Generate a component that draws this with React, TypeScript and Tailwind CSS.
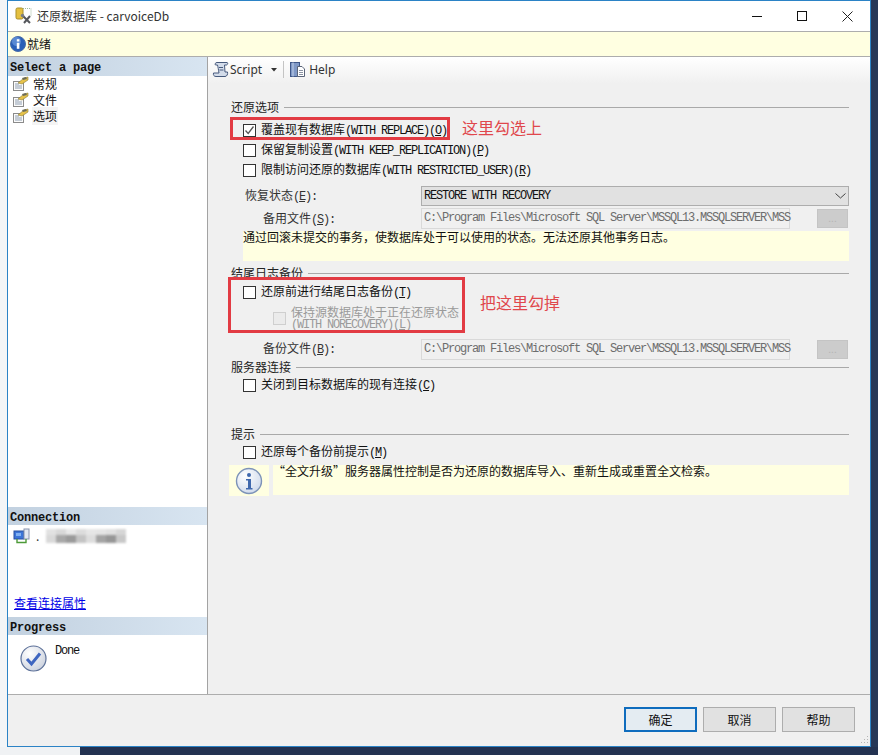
import type { ReactNode } from "react";

const monoCls = "font-['Liberation_Mono',monospace] text-[12px] tracking-[-1.2px]";

function Mono({ children }: { children: ReactNode }) {
  return <span className={monoCls}>{children}</span>;
}

function CheckMark() {
  return (
    <svg width="11" height="11" viewBox="0 0 11 11" fill="none">
      <path d="M1.5 5.5 L4.2 8.5 L9.5 1.5" stroke="#555" strokeWidth="1.3" />
    </svg>
  );
}

function CheckRow({ checked, children }: { checked?: boolean; children: ReactNode }) {
  return (
    <div className="h-5 ml-3 flex items-center gap-[5px] text-[12px] text-[#111]">
      <span className="w-[13px] h-[13px] border border-[#333] bg-white flex items-center justify-center shrink-0">
        {checked && <CheckMark />}
      </span>
      <span className="whitespace-nowrap">{children}</span>
    </div>
  );
}

function GroupHeader({ title, className }: { title: string; className: string }) {
  return (
    <div className={`h-4 flex items-center gap-[5px] text-[12px] text-[#222] ${className}`}>
      <span className="whitespace-nowrap">{title}</span>
      <span className="flex-1 h-px bg-[#a9a9a9]" />
    </div>
  );
}

function PathRow({ label, className }: { label: ReactNode; className: string }) {
  return (
    <div className={`flex items-center ${className}`}>
      <div className="w-[190px] pl-8 text-[12px] text-[#333] whitespace-nowrap">{label}</div>
      <div className={`w-[369px] h-[21px] border border-[#d9d9d9] bg-[#f0f0f0] text-[#6d6d6d] pl-[2px] leading-[19px] whitespace-nowrap ${monoCls}`}>
        C:\Program Files\Microsoft SQL Server\MSSQL13.MSSQLSERVER\MSS
      </div>
      <div className="ml-[27px] w-[31px] h-[19px] bg-[#cccccc] border border-[#c4c4c4] text-[#b5b5b5] text-[10px] leading-[15px] text-center">
        ...
      </div>
    </div>
  );
}

function SideHeader({ title, className }: { title: string; className: string }) {
  return (
    <div className={`pl-[2px] pt-[3px] flex items-center bg-gradient-to-r from-[#c2d1e0] to-[#d8e5f1] font-['Liberation_Mono',monospace] text-[12px] font-bold tracking-[-0.2px] text-[#111] shrink-0 ${className}`}>
      {title}
    </div>
  );
}

function PageIcon() {
  return (
    <svg width="17" height="16" viewBox="0 0 17 16" className="shrink-0">
      <rect x="1.5" y="5.5" width="10" height="9" fill="#fbfbfb" stroke="#8b8b8b" />
      <path d="M3 8h4M3 10h7M3 12h7" stroke="#8e9db0" />
      <path d="M6 7 L12 2 L16 1 L16 4 L10 8 Z" fill="#e6c24a" stroke="#8a7a35" strokeWidth="0.6" />
      <path d="M10 2 L14 1 L15 3 L11 4 Z" fill="#6c6c58" />
    </svg>
  );
}

function NavRow({ label, active }: { label: string; active?: boolean }) {
  return (
    <div className="h-4 pl-[4px] flex items-center gap-[3px] text-[12px] text-[#111]">
      <PageIcon />
      <span className={active ? "bg-[#f4f4f4] px-[1px]" : "px-[1px]"}>{label}</span>
    </div>
  );
}

function InfoBadge() {
  return (
    <svg width="16" height="16" viewBox="0 0 16 16">
      <circle cx="8" cy="8" r="7.5" fill="#2a5fb8" stroke="#4a6ea8" />
      <circle cx="6.5" cy="5.5" r="4.5" fill="#7aa5e4" opacity="0.6" />
      <rect x="6.8" y="6.8" width="2.6" height="6" fill="#fff" />
      <rect x="6.8" y="3.2" width="2.6" height="2.3" fill="#fff" />
    </svg>
  );
}

function TitleIcon() {
  return (
    <svg width="18" height="18" viewBox="0 0 18 18">
      <path d="M8 1.5h8v8" fill="none" stroke="#9db89d" strokeDasharray="1 1" />
      <rect x="1" y="1" width="7" height="11" rx="1.5" fill="#e5c040" stroke="#a98f2a" />
      <path d="M7 8 L15 16 M15 9 L9 16" stroke="#55575c" strokeWidth="2" />
      <circle cx="7.5" cy="8.5" r="1.7" fill="#7b7e85" />
    </svg>
  );
}

function ScriptIcon() {
  return (
    <svg width="17" height="17" viewBox="0 0 17 17">
      <path d="M5 1.5 H15 C16 1.5 16 3.5 14.5 4 H12.5 L13 11 H15.5 C16 13 15 15.5 13 15.5 H4 C2 15.5 1 14 1.5 12 H7 C6.5 9 6 6 5.5 4 H3.5 C2.5 3 3.5 1.5 5 1.5 Z" fill="#d3dcea" stroke="#46597c" />
      <path d="M7 6.5h4M7.5 9h4" stroke="#46597c" />
    </svg>
  );
}

function HelpIcon() {
  return (
    <svg width="17" height="17" viewBox="0 0 17 17">
      <rect x="1.5" y="1.5" width="9" height="14" fill="#7f98c6" stroke="#3f5788" />
      <path d="M4 1.5v14" stroke="#c4d2ea" />
      <path d="M8.5 5.5 H13 L15.5 8 V15.5 H8.5 Z" fill="#fff" stroke="#5a6478" />
      <path d="M10 9.5h4M10 11.5h4M10 13.5h4" stroke="#8b93a3" />
    </svg>
  );
}

function ConnIcon() {
  return (
    <svg width="17" height="16" viewBox="0 0 17 16">
      <rect x="1" y="3" width="10" height="8" fill="#3b74d8" stroke="#28509e" />
      <rect x="3" y="5" width="5" height="3" fill="#7fb0f2" />
      <rect x="11" y="1" width="5" height="10" fill="#e3e8f2" stroke="#8793ad" />
      <path d="M4 11v3.5h9V11" fill="none" stroke="#4d9a38" strokeWidth="1.4" />
    </svg>
  );
}

function DoneIcon() {
  return (
    <svg width="27" height="27" viewBox="0 0 27 27">
      <defs>
        <radialGradient id="doneFill" cx="0.35" cy="0.3" r="0.9">
          <stop offset="0" stopColor="#ffffff" />
          <stop offset="1" stopColor="#c3cad8" />
        </radialGradient>
      </defs>
      <circle cx="13.5" cy="13.5" r="12.5" fill="url(#doneFill)" stroke="#5d7199" strokeWidth="1.2" />
      <path d="M7 14 L11.5 19 L20 8.5" fill="none" stroke="#3f66c0" strokeWidth="3" />
    </svg>
  );
}

function BigInfoIcon() {
  return (
    <svg width="28" height="28" viewBox="0 0 28 28">
      <defs>
        <radialGradient id="infoFill" cx="0.35" cy="0.3" r="0.9">
          <stop offset="0" stopColor="#ffffff" />
          <stop offset="1" stopColor="#c6d3e8" />
        </radialGradient>
      </defs>
      <circle cx="14" cy="14" r="12.5" fill="url(#infoFill)" stroke="#7d93b8" strokeWidth="1.4" />
      <circle cx="14" cy="8" r="2" fill="#3f68ad" />
      <path d="M11 12h5v9h1.5v1.5h-6.5V21H13v-7.5h-2Z" fill="#3f68ad" />
    </svg>
  );
}

// the server name is pixelated out in the picture
function BlurredName() {
  const upper = ["bg-[#e2e2e2]", "bg-[#d8d8d8]", "bg-[#e8e8e8]", "bg-[#dcdcdc]", "bg-[#e6e6e6]", "bg-[#e4e4e4]", "bg-[#e0e0e0]", "bg-[#d6d6d6]"];
  const lower = ["bg-[#d9d9d9]", "bg-[#a8a8a8]", "bg-[#9a9a9a]", "bg-[#c4c4c4]", "bg-[#dddddd]", "bg-[#a4a4a4]", "bg-[#969696]", "bg-[#c8c8c8]"];
  return (
    <span className="flex flex-col h-[14px] w-20 blur-[1px]">
      <span className="flex h-[6px]">
        {upper.map((b, i) => (
          <span key={i} className={`flex-1 ${b}`} />
        ))}
      </span>
      <span className="flex h-[8px]">
        {lower.map((b, i) => (
          <span key={i} className={`flex-1 ${b}`} />
        ))}
      </span>
    </span>
  );
}

function DialogButton({ label, primary }: { label: string; primary?: boolean }) {
  return (
    <div
      className={
        primary
          ? "w-[73px] h-[25px] border-2 border-[#0f6cbd] bg-[#e4ecf2] text-[12px] text-[#111] flex items-center justify-center"
          : "w-[73px] h-[25px] border border-[#adadad] bg-[#e1e1e1] text-[12px] text-[#111] flex items-center justify-center"
      }
    >
      {label}
    </div>
  );
}

export default function App() {
  return (
    <div lang="zh-CN" className="w-[878px] h-[755px] flex flex-col overflow-hidden font-['Noto_Sans_CJK_SC',sans-serif]">
      <div className="h-[747px] flex shrink-0">
        <div className="w-[7px] bg-[#f3f5f7]" />
        {/* Dialog */}
        <div className="relative w-[864px] border border-[#2b83c6] bg-[#f0f0f0] flex flex-col">
          {/* Title bar */}
          <div className="h-[30px] bg-white flex items-center pl-[7px] shrink-0">
            <TitleIcon />
            <span className="ml-[4px] text-[12px] text-[#333]">还原数据库 - carvoiceDb</span>
            <div className="ml-auto flex items-center pr-[17px] gap-[35px]">
              <span className="w-[10px] h-px bg-[#111]" />
              <span className="w-[10px] h-[10px] border border-[#111]" />
              <svg width="11" height="11" viewBox="0 0 11 11">
                <path d="M0.5 0.5 L10.5 10.5 M10.5 0.5 L0.5 10.5" stroke="#222" />
              </svg>
            </div>
          </div>
          {/* Status */}
          <div className="h-[26px] border-y border-[#adadad] bg-[#ffffe1] flex items-center pl-[2px] gap-px text-[12px] text-[#111] shrink-0">
            <InfoBadge />
            <span>就绪</span>
          </div>
          {/* Main */}
          <div className="h-[638px] flex border-b border-[#adadad] shrink-0">
            <div className="w-[200px] bg-white border-r border-[#a3a3a3] flex flex-col shrink-0">
              <SideHeader title="Select a page" className="h-[19px]" />
              <div className="flex-1 flex flex-col">
                <NavRow label="常规" />
                <NavRow label="文件" />
                <NavRow label="选项" active />
              </div>
              <SideHeader title="Connection" className="h-[18px]" />
              <div className="h-[92px] flex flex-col shrink-0">
                <div className="h-[22px] flex items-center pl-[5px] text-[12px] text-[#333]">
                  <ConnIcon />
                  <span className="ml-[6px] mr-[7px]">.</span>
                  <BlurredName />
                </div>
                <a className="mt-auto mb-[5px] ml-[6px] text-[12px] text-[#0000e6] underline">查看连接属性</a>
              </div>
              <SideHeader title="Progress" className="h-[18px]" />
              <div className="h-[59px] pl-3 pt-[10px] flex gap-[8px] shrink-0">
                <DoneIcon />
                <span className={`${monoCls} -mt-[3px] text-[#111]`}>Done</span>
              </div>
            </div>
            {/* Options pane */}
            <div className="flex-1 flex flex-col min-w-0">
              <div className="h-[27px] pb-[2px] bg-gradient-to-b from-white to-[#f0f0f0] flex items-center pl-[4px] text-[12px] text-[#333] font-['Noto_Sans',sans-serif] shrink-0">
                <ScriptIcon />
                <span className="ml-[1px]">Script</span>
                <svg width="7" height="4" viewBox="0 0 7 4" className="ml-[9px]">
                  <path d="M0 0h6L3 3.5Z" fill="#333" />
                </svg>
                <span className="ml-[5px] w-px h-[17px] bg-[#c4c4c4]" />
                <span className="ml-[5px] flex">
                  <HelpIcon />
                </span>
                <span className="ml-[3px]">Help</span>
              </div>
              <div className="relative pl-[23px] pr-[21px] flex flex-col">
                <GroupHeader title="还原选项" className="mt-[15px]" />
                <div className="mt-[5px]">
                  <CheckRow checked>
                    覆盖现有数据库<Mono>(WITH REPLACE)(<u>O</u>)</Mono>
                  </CheckRow>
                  <CheckRow>
                    保留复制设置<Mono>(WITH KEEP_REPLICATION)(<u>P</u>)</Mono>
                  </CheckRow>
                  <CheckRow>
                    限制访问还原的数据库<Mono>(WITH RESTRICTED_USER)(<u>R</u>)</Mono>
                  </CheckRow>
                </div>
                <div className="mt-[6px] h-[20px] flex items-center">
                  <div className="w-[190px] pl-[14px] text-[12px] text-[#333] whitespace-nowrap">
                    恢复状态<Mono>(<u>E</u>):</Mono>
                  </div>
                  <div className={`flex-1 h-[20px] border border-[#adadad] bg-[#e1e1e1] pl-[2px] pr-[2px] flex items-center justify-between text-[#111] ${monoCls}`}>
                    RESTORE WITH RECOVERY
                    <svg width="11" height="6" viewBox="0 0 11 6">
                      <path d="M0.5 0.5 L5.5 5 L10.5 0.5" fill="none" stroke="#444" />
                    </svg>
                  </div>
                </div>
                <PathRow
                  className="mt-[2px] h-[21px]"
                  label={
                    <>
                      备用文件<Mono>(<u>S</u>):</Mono>
                    </>
                  }
                />
                <div className="mt-[2px] ml-3 h-[30px] bg-[#ffffe1] text-[12px] leading-[12px] text-[#111] whitespace-nowrap">
                  通过回滚未提交的事务，使数据库处于可以使用的状态。无法还原其他事务日志。
                </div>
                <GroupHeader title="结尾日志备份" className="mt-[4px]" />
                <div className="mt-[1px]">
                  <CheckRow>
                    还原前进行结尾日志备份<Mono>(<u>T</u>)</Mono>
                  </CheckRow>
                </div>
                <div className="mt-[3px] ml-[42px] h-[26px] flex items-center gap-[5px] text-[#9a9a9a]">
                  <span className="w-[13px] h-[13px] border border-[#cfcfcf] bg-[#ebebeb] shrink-0 mt-[1px]" />
                  <div className="text-[12px] leading-[12px]">
                    <div className="whitespace-nowrap">保持源数据库处于正在还原状态</div>
                    <div className={`mt-[2px] leading-[11px] ${monoCls}`}>
                      (WITH NORECOVERY)(<u>L</u>)
                    </div>
                  </div>
                </div>
                <PathRow
                  className="mt-[8px] h-[20px]"
                  label={
                    <>
                      备份文件<Mono>(<u>B</u>):</Mono>
                    </>
                  }
                />
                <GroupHeader title="服务器连接" className="" />
                <CheckRow>
                  关闭到目标数据库的现有连接<Mono>(<u>C</u>)</Mono>
                </CheckRow>
                <GroupHeader title="提示" className="mt-[31px]" />
                <CheckRow>
                  还原每个备份前提示<Mono>(<u>M</u>)</Mono>
                </CheckRow>
                <div className="mt-[3px] -ml-[2px] flex gap-[4px] h-[31px]">
                  <div className="w-[40px] bg-[#ffffe1] flex items-center justify-center">
                    <BigInfoIcon />
                  </div>
                  <div className="flex-1 h-[30px] bg-[#ffffe1] text-[12px] leading-[12px] text-[#111] whitespace-nowrap">
                    “全文升级”服务器属性控制是否为还原的数据库导入、重新生成或重置全文检索。
                  </div>
                </div>

                {/* Red annotations drawn over the screenshot */}
                <div className="absolute left-[22px] top-[33px] w-[220px] h-[23px] border-[3px] border-[#e23b43]" />
                <div className="absolute left-[254px] top-[32px] text-[16px] leading-[22px] text-[#e0474c] whitespace-nowrap">
                  这里勾选上
                </div>
                <div className="absolute left-[20px] top-[193px] w-[237px] h-[56px] border-[3px] border-[#e23b43]" />
                <div className="absolute left-[272px] top-[207px] text-[16px] leading-[22px] text-[#e0474c] whitespace-nowrap">
                  把这里勾掉
                </div>
              </div>
            </div>
          </div>
          {/* Footer */}
          <div className="flex-1 flex justify-end gap-[6px] pt-[12px] pr-[15px]">
            <DialogButton label="确定" primary />
            <DialogButton label="取消" />
            <DialogButton label="帮助" />
          </div>
          <svg width="10" height="10" viewBox="0 0 10 10" className="absolute right-[1px] bottom-[1px]">
            <path d="M8 1h1v1H8ZM5 4h1v1H5ZM8 4h1v1H8ZM2 7h1v1H2ZM5 7h1v1H5ZM8 7h1v1H8Z" fill="#b5b5b5" />
          </svg>
        </div>
        <div className="flex-1 bg-[#263757]" />
      </div>
      <div className="flex-1 flex">
        <div className="w-[80px] bg-[#f0f2f4]" />
        <div className="flex-1 bg-[#233251]" />
      </div>
    </div>
  );
}
